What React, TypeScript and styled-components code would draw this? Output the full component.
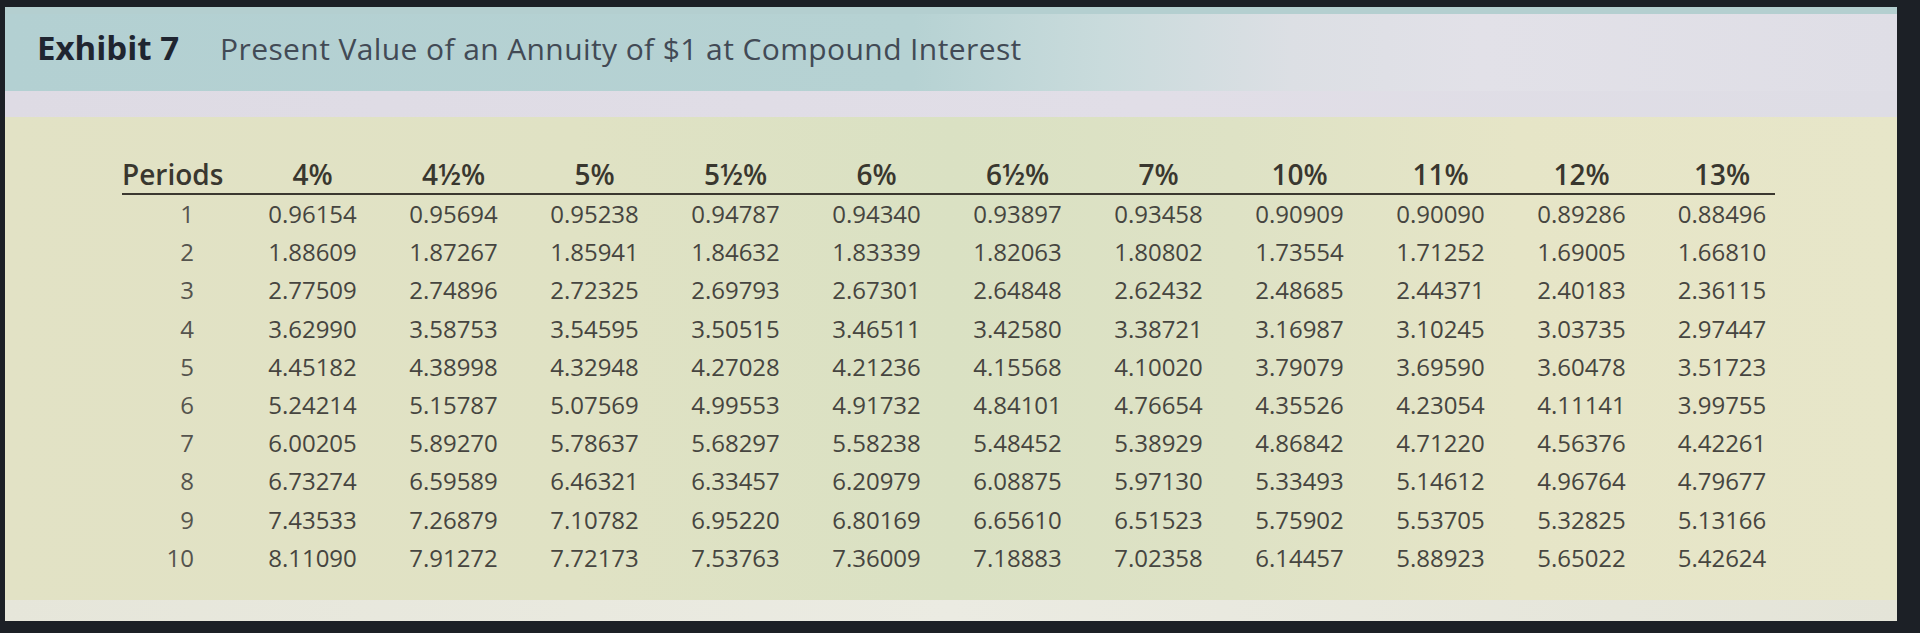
import React from 'react';
import styled, { createGlobalStyle } from 'styled-components';

const GlobalStyle = createGlobalStyle`
  html, body {
    margin: 0;
    padding: 0;
    background: #1c2026;
  }
  body {
    font-family: 'Open Sans', 'Noto Sans', 'Liberation Sans', sans-serif;
  }
`;

const Screen = styled.div`
  display: flex;
  flex-direction: column;
  height: 614px;
  margin: 7px 23px 12px 5px;
  overflow: hidden;
  background: #e3e3c6;
`;

const TitleBand = styled.header`
  display: flex;
  align-items: baseline;
  gap: 41px;
  height: 84px;
  box-sizing: border-box;
  padding: 24px 0 0 32px;
  background: linear-gradient(
    90deg,
    #b3d0d2 0%,
    #b6d2d3 48%,
    #c9dbdc 58%,
    #dcdfe4 68%,
    #e2e1e8 78%,
    #dfdee6 100%
  );
  box-shadow: inset 0 7px 0 #b4cfd0;
`;

const ExhibitLabel = styled.span`
  font-size: 33px;
  line-height: 1;
  font-weight: 700;
  color: #1f2530;
`;

const ExhibitTitle = styled.span`
  font-size: 30px;
  line-height: 1;
  font-weight: 400;
  letter-spacing: 0.4px;
  color: #424a55;
`;

const Strip = styled.div`
  height: 26px;
  background: linear-gradient(90deg, #dedbe4 0%, #e1dee7 60%, #dedde5 100%);
`;

const Body = styled.section`
  flex: 1;
  padding: 43px 0 0 117px;
  background: linear-gradient(
    90deg,
    #e2e2c5 0%,
    #e0e2c4 30%,
    #dae1c3 50%,
    #dee2c5 65%,
    #e6e5c7 80%,
    #e7e6c9 100%
  );
`;

const Grid = styled.div`
  display: grid;
  grid-template-columns: 120px repeat(10, 141px) 123px;
`;

const HeadCell = styled.div<{ $first?: boolean; $last?: boolean }>`
  font-size: 28px;
  line-height: 1;
  font-weight: 600;
  color: #39372f;
  padding-bottom: 5px;
  padding-left: ${(p) => (p.$last ? '17px' : '0')};
  text-align: ${(p) => (p.$first ? 'left' : 'center')};
  border-bottom: 2px solid #3b3830;
`;

const Cell = styled.div<{ $period?: boolean; $last?: boolean }>`
  font-size: 24px;
  line-height: 38.2px;
  color: ${(p) => (p.$period ? '#55544e' : '#464540')};
  text-align: ${(p) => (p.$period ? 'right' : 'center')};
  padding-right: ${(p) => (p.$period ? '48px' : '0')};
  padding-left: ${(p) => (p.$last ? '17px' : '0')};
`;

const Footer = styled.div`
  height: 21px;
  background: linear-gradient(90deg, #e6e6da 0%, #ebebe2 50%, #e4e4d8 100%);
`;

const rates = ['4%', '4½%', '5%', '5½%', '6%', '6½%', '7%', '10%', '11%', '12%', '13%'];

const values: string[][] = [
  ['0.96154', '0.95694', '0.95238', '0.94787', '0.94340', '0.93897', '0.93458', '0.90909', '0.90090', '0.89286', '0.88496'],
  ['1.88609', '1.87267', '1.85941', '1.84632', '1.83339', '1.82063', '1.80802', '1.73554', '1.71252', '1.69005', '1.66810'],
  ['2.77509', '2.74896', '2.72325', '2.69793', '2.67301', '2.64848', '2.62432', '2.48685', '2.44371', '2.40183', '2.36115'],
  ['3.62990', '3.58753', '3.54595', '3.50515', '3.46511', '3.42580', '3.38721', '3.16987', '3.10245', '3.03735', '2.97447'],
  ['4.45182', '4.38998', '4.32948', '4.27028', '4.21236', '4.15568', '4.10020', '3.79079', '3.69590', '3.60478', '3.51723'],
  ['5.24214', '5.15787', '5.07569', '4.99553', '4.91732', '4.84101', '4.76654', '4.35526', '4.23054', '4.11141', '3.99755'],
  ['6.00205', '5.89270', '5.78637', '5.68297', '5.58238', '5.48452', '5.38929', '4.86842', '4.71220', '4.56376', '4.42261'],
  ['6.73274', '6.59589', '6.46321', '6.33457', '6.20979', '6.08875', '5.97130', '5.33493', '5.14612', '4.96764', '4.79677'],
  ['7.43533', '7.26879', '7.10782', '6.95220', '6.80169', '6.65610', '6.51523', '5.75902', '5.53705', '5.32825', '5.13166'],
  ['8.11090', '7.91272', '7.72173', '7.53763', '7.36009', '7.18883', '7.02358', '6.14457', '5.88923', '5.65022', '5.42624'],
];

export default function App() {
  return (
    <>
      <GlobalStyle />
      <Screen>
        <TitleBand>
          <ExhibitLabel>Exhibit 7</ExhibitLabel>
          <ExhibitTitle>Present Value of an Annuity of $1 at Compound Interest</ExhibitTitle>
        </TitleBand>
        <Strip />
        <Body>
          <Grid>
            <HeadCell $first>Periods</HeadCell>
            {rates.map((r, i) => (
              <HeadCell key={r} $last={i === rates.length - 1}>
                {r}
              </HeadCell>
            ))}
            {values.map((row, i) => (
              <React.Fragment key={`row-${i + 1}`}>
                <Cell $period>{i + 1}</Cell>
                {row.map((v, j) => (
                  <Cell key={`${i}-${j}`} $last={j === row.length - 1}>
                    {v}
                  </Cell>
                ))}
              </React.Fragment>
            ))}
          </Grid>
        </Body>
        <Footer />
      </Screen>
    </>
  );
}
